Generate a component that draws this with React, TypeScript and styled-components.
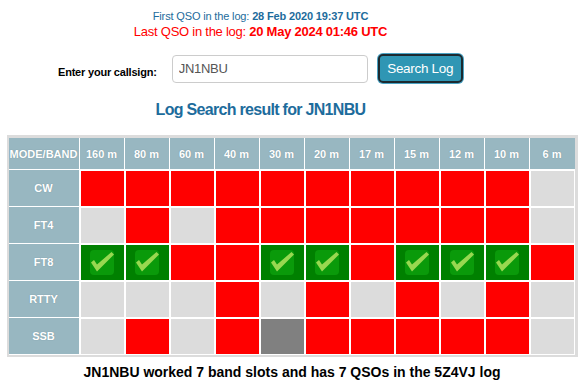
import React from "react";
import styled, { createGlobalStyle } from "styled-components";

const GlobalStyle = createGlobalStyle`
  html, body {
    margin: 0;
    padding: 0;
    background: #ffffff;
  }
  body {
    font-family: "Liberation Sans", Arial, sans-serif;
    color: #000;
  }
`;

const Page = styled.div`
  width: 584px;
  display: flex;
  flex-direction: column;
  align-items: center;
`;

/* search area sits in a narrower column on the left */
const TopSection = styled.div`
  align-self: flex-start;
  width: 521px;
  display: flex;
  flex-direction: column;
  align-items: center;
`;

const LogInfo = styled.div`
  margin-top: 8px;
  display: flex;
  flex-direction: column;
  align-items: center;
`;

const InfoLine = styled.div<{ $tone: "first" | "last" }>`
  font-size: ${(p) => (p.$tone === "first" ? "11px" : "13px")};
  letter-spacing: ${(p) => (p.$tone === "first" ? "-0.15px" : "-0.25px")};
  line-height: 16px;
  color: ${(p) => (p.$tone === "first" ? "#1d6c9c" : "#ff0000")};
  b {
    font-weight: bold;
  }
`;

const SearchForm = styled.form`
  margin-top: 14px;
  align-self: flex-start;
  padding-left: 58px;
  display: flex;
  align-items: center;
`;

const Label = styled.label`
  font-size: 11px;
  letter-spacing: -0.2px;
  font-weight: bold;
  padding-top: 6px;
  margin-right: 15px;
`;

const CallInput = styled.input`
  box-sizing: border-box;
  width: 196px;
  height: 28px;
  border: 1px solid #cccccc;
  border-radius: 4px;
  padding: 0 6px;
  font-family: "Liberation Sans", Arial, sans-serif;
  font-size: 13px;
  letter-spacing: -0.3px;
  color: #555555;
  margin-right: 10px;
  outline: none;
`;

const SearchButton = styled.button`
  box-sizing: border-box;
  width: 85px;
  height: 29px;
  border-radius: 5px;
  border: 2px solid #1c2a30;
  box-shadow: 0 0 0 1px #4aa3c4;
  background: #2f96b4;
  color: #ffffff;
  font-family: "Liberation Sans", Arial, sans-serif;
  font-size: 13.5px;
  letter-spacing: -0.3px;
  padding: 0;
  cursor: pointer;
`;

const ResultTitle = styled.h3`
  margin: 17px 0 0 0;
  text-align: center;
  font-size: 16px;
  letter-spacing: -0.7px;
  line-height: 20px;
  font-weight: bold;
  color: #1d6c9c;
`;

const TableFrame = styled.div`
  margin-top: 15px;
  background: #dcdcdc;
  padding: 3px 3px 2px 2px;
`;

const Grid = styled.div`
  display: grid;
  grid-template-columns: 71px repeat(11, 45px);
  grid-template-rows: 32px repeat(5, 37px);
  background: #ffffff;
`;

const HeadCell = styled.div<{ $last?: boolean }>`
  box-sizing: border-box;
  background: #98b7c1;
  border-right: ${(p) => (p.$last ? "0" : "1px solid #ffffff")};
  border-bottom: 1px solid #ffffff;
  color: #ffffff;
  font-size: 11px;
  font-weight: bold;
  display: flex;
  align-items: center;
  justify-content: center;
  white-space: nowrap;
  text-shadow: 0 0 1px rgba(80, 110, 120, 0.6);
`;

const ModeCell = styled.div`
  box-sizing: border-box;
  background: #98b7c1;
  border-right: 1px solid #ffffff;
  border-bottom: 1px solid #ffffff;
  color: #ffffff;
  font-size: 11px;
  font-weight: bold;
  display: flex;
  align-items: center;
  justify-content: center;
  text-shadow: 0 0 1px rgba(80, 110, 120, 0.6);
`;

type Slot = "worked" | "none" | "confirmed" | "invalid";

const slotColors: Record<Slot, string> = {
  worked: "#ff0000",
  none: "#dcdcdc",
  confirmed: "#008000",
  invalid: "#808080",
};

const SlotCell = styled.div<{ $slot: Slot }>`
  box-sizing: border-box;
  border: 1px solid #ffffff;
  background: ${(p) => slotColors[p.$slot]};
  display: flex;
  align-items: center;
  justify-content: center;
`;

const Summary = styled.div`
  margin-top: 6px;
  font-size: 14px;
  line-height: 18px;
  font-weight: bold;
  color: #000000;
`;

const CheckBadge = () => (
  <svg width="24" height="25" viewBox="0 0 24 25" style={{ overflow: "visible" }}>
    <rect x="0" y="0" width="24" height="25" rx="4" fill="#0a9a0a" />
    <polygon
      points="1,12.5 4,10 7,14.5 21.5,2 24,4.5 7,21.5"
      fill="#98d850"
    />
  </svg>
);

const bands = ["160 m", "80 m", "60 m", "40 m", "30 m", "20 m", "17 m", "15 m", "12 m", "10 m", "6 m"];

const W: Slot = "worked";
const N: Slot = "none";
const C: Slot = "confirmed";
const X: Slot = "invalid";

const modes: { name: string; slots: Slot[] }[] = [
  { name: "CW", slots: [W, W, W, W, W, W, W, W, W, W, N] },
  { name: "FT4", slots: [N, W, N, W, W, W, W, W, W, W, N] },
  { name: "FT8", slots: [C, C, W, W, C, C, W, C, C, C, W] },
  { name: "RTTY", slots: [N, N, N, W, N, W, N, W, N, W, N] },
  { name: "SSB", slots: [N, W, N, W, X, W, W, W, W, W, N] },
];

export default function App() {
  return (
    <>
      <GlobalStyle />
      <Page>
        <TopSection>
          <LogInfo>
            <InfoLine $tone="first">
              First QSO in the log: <b>28 Feb 2020 19:37 UTC</b>
            </InfoLine>
            <InfoLine $tone="last">
              Last QSO in the log: <b>20 May 2024 01:46 UTC</b>
            </InfoLine>
          </LogInfo>

          <SearchForm onSubmit={(e) => e.preventDefault()}>
            <Label htmlFor="call">Enter your callsign:</Label>
            <CallInput id="call" defaultValue="JN1NBU" />
            <SearchButton type="submit">Search Log</SearchButton>
          </SearchForm>

          <ResultTitle>Log Search result for JN1NBU</ResultTitle>
        </TopSection>

        <TableFrame>
          <Grid>
            <HeadCell>MODE/BAND</HeadCell>
            {bands.map((b, i) => (
              <HeadCell key={b} $last={i === bands.length - 1}>
                {b}
              </HeadCell>
            ))}
            {modes.map((m) => (
              <React.Fragment key={m.name}>
                <ModeCell>{m.name}</ModeCell>
                {m.slots.map((s, i) => (
                  <SlotCell key={i} $slot={s}>
                    {s === "confirmed" && <CheckBadge />}
                  </SlotCell>
                ))}
              </React.Fragment>
            ))}
          </Grid>
        </TableFrame>

        <Summary>JN1NBU worked 7 band slots and has 7 QSOs in the 5Z4VJ log</Summary>
      </Page>
    </>
  );
}
